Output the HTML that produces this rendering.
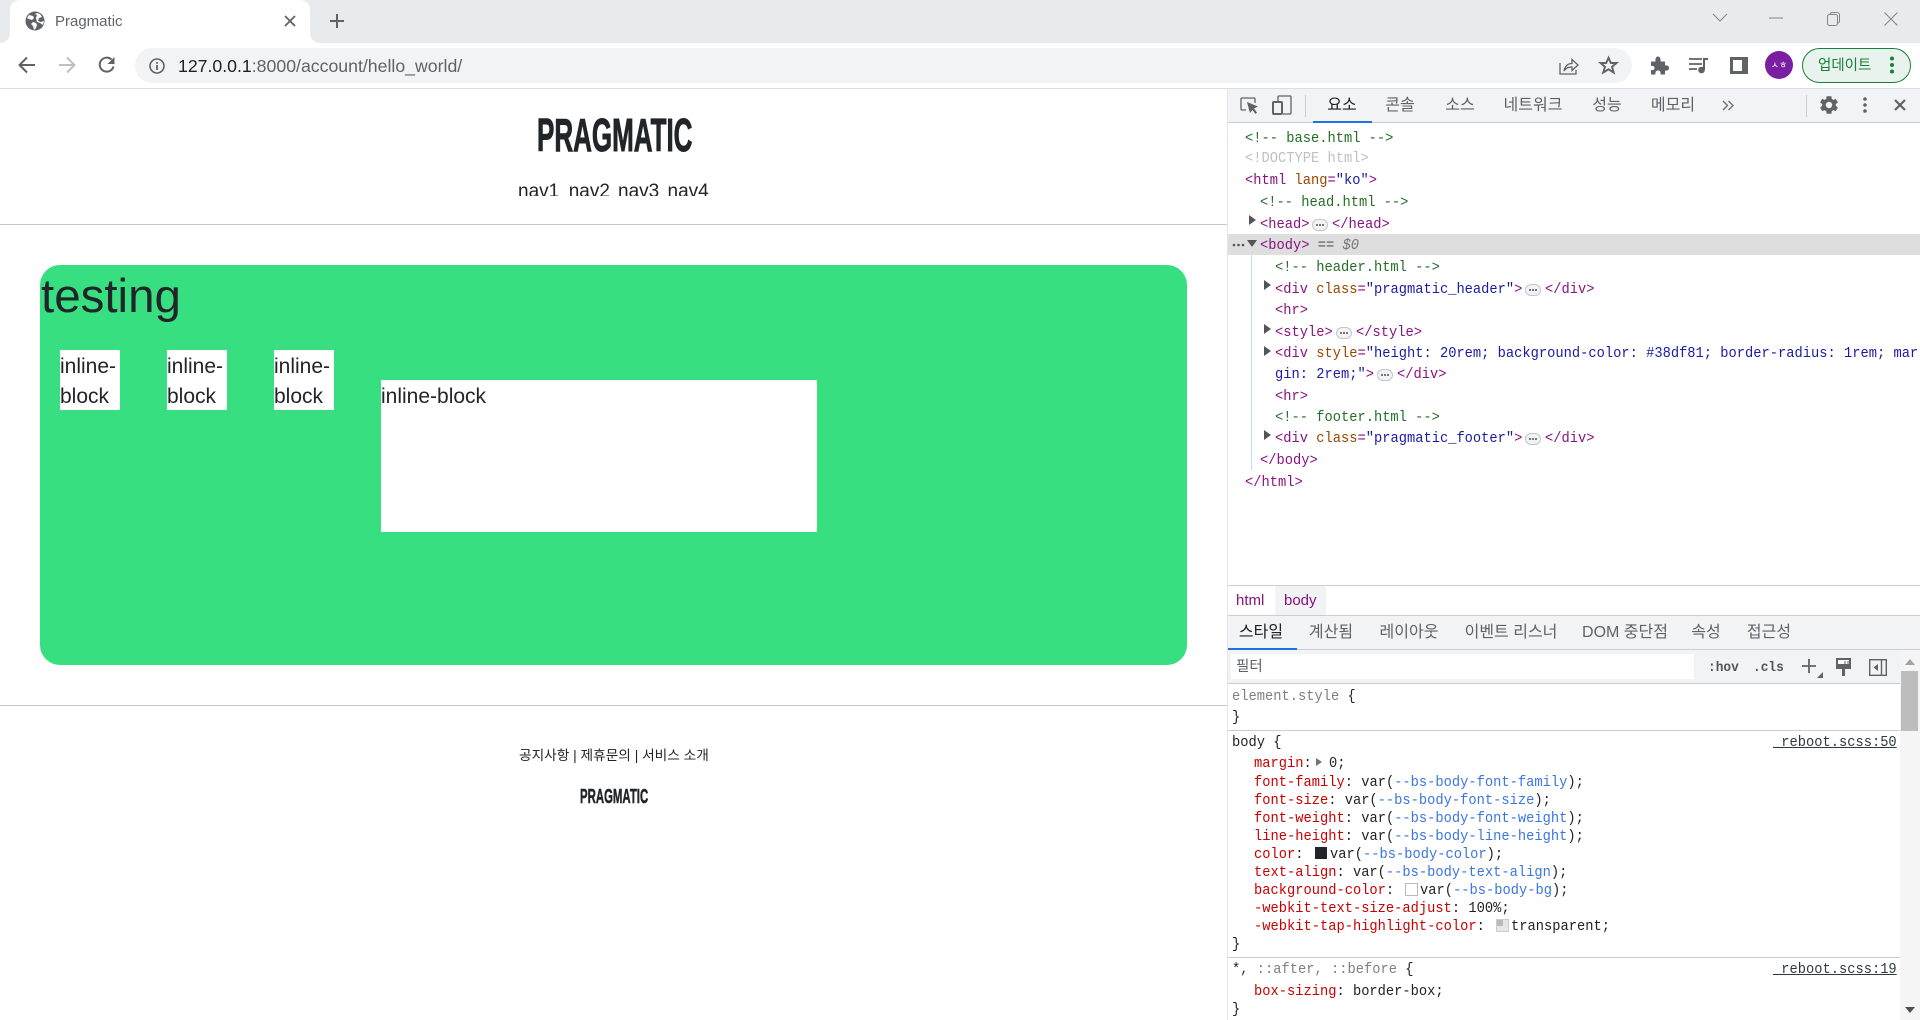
<!DOCTYPE html>
<html lang="ko"><head><meta charset="utf-8"><title>Pragmatic</title>
<style>
html,body{margin:0;padding:0;width:1920px;height:1020px;overflow:hidden;background:#fff}
body{position:relative;font-family:"Liberation Sans","Noto Sans CJK KR",sans-serif;color:#212529}
.a{position:absolute}
.t{position:absolute;white-space:pre;line-height:20px;height:20px}
.c{transform:translateX(-50%)}
.l{position:absolute;white-space:pre;height:20px;line-height:20px;font-family:"Liberation Mono","Noto Sans CJK KR",monospace;font-size:15px;transform:scaleX(.916);transform-origin:0 0;color:#222}
.g{color:#236e25}.p{color:#881280}.o{color:#994500}.b{color:#1a1aa6}.d{color:#c0c0c0}
.r{color:#c80000}.v{color:#3a76e0}.k{color:#303942}.e{color:#808080}
.tab{position:absolute;top:96px;font-size:16px;line-height:20px;color:#5f6368;transform:translateX(-50%);white-space:pre}
.tab2{position:absolute;top:623px;font-size:16px;line-height:20px;color:#5f6368;transform:translateX(-50%);white-space:pre}
.pill{position:absolute;width:14px;height:10px;margin-top:1px;border:1px solid #c4c6c9;border-radius:6px;background:#f1f3f4}
.pill:after{content:"";position:absolute;left:3px;top:4px;width:2px;height:2px;background:#777;box-shadow:3px 0 #777,6px 0 #777}
.tri{position:absolute;width:0;height:0;border-top:5px solid transparent;border-bottom:5px solid transparent;border-left:7px solid #555}
.tb{position:absolute;background:#fff}
.blk{position:absolute;background:#fff;color:#212529;font-size:21px}
svg{position:absolute;overflow:visible}
</style></head><body>

<!-- browser chrome -->
<div class="a" style="left:0;top:0;width:1920px;height:43px;background:#e8eaed"></div>
<svg style="left:0;top:0" width="330" height="44"><path d="M0 43a10 10 0 0 0 10-10V10A10 10 0 0 1 20 0H300a10 10 0 0 1 10 10V33a10 10 0 0 0 10 10z" fill="#fff"/></svg>
<svg style="left:25px;top:11px" width="20" height="20" viewBox="0 0 20 20"><circle cx="10" cy="10" r="9.5" fill="#5f6368"/><path d="M4 4l4 1 1 2-2 2-3-1-2-1zM8 11l3 1 1 2-1 3-2 2-1-4-2-2zM12 2l3 1 2 3-3 1-1 3 3 1 3-1-1 4-3-2-3-1-1-4 1-3-2-1z" fill="#fff"/></svg>
<div class="t" style="left:55px;top:12px;font-size:15px;color:#5f6368">Pragmatic</div>
<svg style="left:283px;top:14px" width="14" height="14"><path d="M2 2L12 12M12 2L2 12" stroke="#5f6368" stroke-width="1.8"/></svg>
<svg style="left:329px;top:13px" width="16" height="16"><path d="M8 1V15M1 8H15" stroke="#5f6368" stroke-width="2"/></svg>
<svg style="left:1712px;top:13px" width="16" height="10"><path d="M1 1L8 8L15 1" stroke="#80868b" fill="none"/></svg>
<svg style="left:1769px;top:17px" width="14" height="2"><path d="M0 1H14" stroke="#80868b"/></svg>
<svg style="left:1827px;top:12px" width="13" height="14"><path d="M3 2.5a2 2 0 0 1 2-2H10a2.5 2.5 0 0 1 2.5 2.5V9a2 2 0 0 1-2 2" stroke="#80868b" fill="none"/><rect x=".5" y="2.5" width="10" height="11" rx="2" fill="#e8eaed" stroke="#80868b"/></svg>
<svg style="left:1884px;top:12px" width="14" height="14"><path d="M.5.5L13.500 13.500M13.500.5L.5 13.500" stroke="#80868b"/></svg>

<div class="a" style="left:0;top:43px;width:1920px;height:45px;background:#fff"></div>
<div class="a" style="left:0;top:88px;width:1920px;height:1px;background:#dadce0"></div>
<svg style="left:18px;top:56px" width="18" height="18"><path d="M17 9H2M9 1.500L1.500 9L9 16.500" stroke="#5f6368" stroke-width="2" fill="none"/></svg>
<svg style="left:58px;top:56px" width="18" height="18"><path d="M1 9H16M9 1.500L16.500 9L9 16.500" stroke="#bdc1c6" stroke-width="2" fill="none"/></svg>
<svg style="left:98px;top:56px" width="18" height="18"><path d="M15.500 10.500A7 7 0 1 1 13.500 3.500" stroke="#5f6368" stroke-width="2" fill="none"/><path d="M16.500 1V8H9.500z" fill="#5f6368"/></svg>
<div class="a" style="left:135px;top:48px;width:1497px;height:35px;background:#f1f3f4;border-radius:18px"></div>
<svg style="left:149px;top:58px" width="16" height="16"><circle cx="8" cy="8" r="7" stroke="#5f6368" stroke-width="1.600" fill="none"/><path d="M8 7V12M8 4V5.800" stroke="#5f6368" stroke-width="1.800"/></svg>
<div class="t" style="left:178px;top:56px;font-size:17.7px;color:#5f6368"><span style="color:#202124">127.0.0.1</span>:8000/account/hello_world/</div>
<svg style="left:1559px;top:57px" width="20" height="18"><path d="M1 6V17H17V13" stroke="#5f6368" stroke-width="1.300" fill="none"/><path d="M5 14C6 9 9 6.500 13 6.500V2.500L19 8L13 13.500V10C9 10 7 11 5 14z" stroke="#5f6368" stroke-width="1.300" fill="none"/></svg>
<svg style="left:1599px;top:56px" width="19" height="18"><path d="M9.500 1.800L11.800 7H17.500L13 10.800L14.700 16.500L9.500 13.300L4.300 16.500L6 10.800L1.500 7H7.200z" stroke="#5f6368" stroke-width="1.900" fill="none"/></svg>
<svg style="left:1650px;top:56px" width="19" height="19"><path d="M1 5.500H5.500C5 2 6.500.5 8 .5S11 2 10.500 5.500H15V9.500C18 9 19 10.500 19 12S18 15 15 14.500V18.500H10.500C11 15.500 9.500 14.500 8 14.500S5 15.500 5.500 18.500H1V14C3.500 14.500 4.500 13.500 4.500 12S3.500 9.500 1 10z" fill="#5f6368"/></svg>
<svg style="left:1689px;top:57px" width="20" height="17"><path d="M0 2H13M0 7H13M0 12H8" stroke="#5f6368" stroke-width="1.700"/><path d="M15 2H19M15 1V13" stroke="#5f6368" stroke-width="2"/><circle cx="12.500" cy="13" r="3.300" fill="#5f6368"/></svg>
<svg style="left:1730px;top:57px" width="18" height="17"><path d="M0 0H18V17H0zM3 3V14H12V3z" fill="#5f6368" fill-rule="evenodd"/></svg>
<div class="a" style="left:1765px;top:51px;width:28px;height:28px;border-radius:50%;background:#7b1fa2;color:#fff;font-size:9px;line-height:28px;text-align:center">ㅅㅎ</div>
<div class="a" style="left:1802px;top:48px;width:107px;height:33px;border:1px solid #188038;border-radius:18px;background:#e9f3ed"></div>
<div class="t" style="left:1818px;top:56px;font-size:14.500px;color:#188038">업데이트</div>
<svg style="left:1890px;top:56px" width="4" height="18"><circle cx="2" cy="2.500" r="2" fill="#188038"/><circle cx="2" cy="9" r="2" fill="#188038"/><circle cx="2" cy="15.500" r="2" fill="#188038"/></svg>

<!-- page -->
<div class="a" style="left:0;top:89px;width:1227px;height:931px;background:#fff"></div>
<div class="a" style="left:537px;top:112px;font-size:46px;line-height:46px;font-weight:700;white-space:pre;color:#212529;-webkit-text-stroke:1px #212529;transform:scaleX(.565);transform-origin:0 0">PRAGMATIC</div>
<div class="a" style="left:500px;top:170px;width:240px;height:26px;overflow:hidden;font-size:19px;line-height:27px">
<span class="a" style="left:18px;top:8px">nav1</span><span class="a" style="left:68.700px;top:8px">nav2</span><span class="a" style="left:118px;top:8px">nav3</span><span class="a" style="left:167.500px;top:8px">nav4</span></div>
<div class="a" style="left:0;top:224px;width:1227px;height:1px;background:#c8c9ca"></div>

<div class="a" style="left:40px;top:265px;width:1147px;height:400px;background:#38df81;border-radius:20px"></div>
<div class="a" style="left:41px;top:267px;font-size:47.500px;line-height:60px;color:#212529">testing</div>
<div class="blk" style="left:60px;top:350px;width:60px;height:60px"><div class="a" style="left:0;top:2px;line-height:30px">inline-<br>block</div></div>
<div class="blk" style="left:167px;top:350px;width:60px;height:60px"><div class="a" style="left:0;top:2px;line-height:30px">inline-<br>block</div></div>
<div class="blk" style="left:274px;top:350px;width:60px;height:60px"><div class="a" style="left:0;top:2px;line-height:30px">inline-<br>block</div></div>
<div class="blk" style="left:381px;top:380px;width:436px;height:152px"><div class="a" style="left:0;top:2px;line-height:30px;white-space:pre">inline-block</div></div>

<div class="a" style="left:0;top:705px;width:1227px;height:1px;background:#c8c9ca"></div>
<div class="t" style="left:519px;top:746px;font-size:13.700px;color:#212529">공지사항 | 제휴문의 | 서비스 소개</div>
<div class="a" style="left:580px;top:787px;font-size:20px;line-height:20px;font-weight:700;white-space:pre;color:#212529;-webkit-text-stroke:.5px #212529;transform:scaleX(.57);transform-origin:0 0">PRAGMATIC</div>

<!-- devtools toolbar -->
<div class="a" style="left:1227px;top:89px;width:693px;height:931px;background:#fff"></div>
<div class="a" style="left:1227px;top:89px;width:1px;height:931px;background:#e4e6e9"></div>
<div class="a" style="left:1228px;top:89px;width:692px;height:33px;background:#f1f3f4"></div>
<div class="a" style="left:1228px;top:122px;width:692px;height:1px;background:#cbcdd1"></div>
<svg style="left:1240px;top:97px" width="18" height="17"><path d="M6 13H2a1 1 0 0 1-1-1V2a1 1 0 0 1 1-1H14a1 1 0 0 1 1 1V6" stroke="#5f6368" stroke-width="1.300" fill="none"/><path d="M7 5L18 9.500L14 11.500L17 15.500L15.500 17L12.500 13L10 16z" fill="#5f6368"/></svg>
<svg style="left:1272px;top:95px" width="20" height="20"><path d="M6 6V2a1 1 0 0 1 1-1H18a1 1 0 0 1 1 1V18a1 1 0 0 1-1 1H11" stroke="#5f6368" stroke-width="1.300" fill="none"/><rect x="1" y="7" width="9" height="12" rx="1" fill="#f1f3f4" stroke="#5f6368" stroke-width="2"/></svg>
<div class="a" style="left:1305px;top:95px;width:1px;height:22px;background:#ccc"></div>
<div class="tab" style="left:1342px;color:#202124">요소</div>
<div class="a" style="left:1313px;top:121px;width:59px;height:2px;background:#1a73e8"></div>
<div class="tab" style="left:1400px">콘솔</div>
<div class="tab" style="left:1460px">소스</div>
<div class="tab" style="left:1533px">네트워크</div>
<div class="tab" style="left:1607px">성능</div>
<div class="tab" style="left:1673px">메모리</div>
<svg style="left:1722px;top:100px" width="12" height="11"><path d="M1 1L5.500 5.500L1 10M6.500 1L11 5.500L6.500 10" stroke="#6e7276" stroke-width="1.400" fill="none"/></svg>
<div class="a" style="left:1806px;top:95px;width:1px;height:22px;background:#ccc"></div>
<svg style="left:1818px;top:94px" width="22" height="22" viewBox="0 0 24 24"><path fill-rule="evenodd" d="M19.400 13a7.500 7.500 0 0 0 0-2l2.300-1.800-2.300-3.900-2.700 1.100a7.500 7.500 0 0 0-1.700-1L14.600 2.500H9.400L9 5.400a7.500 7.500 0 0 0-1.700 1L4.600 5.300 2.300 9.200 4.600 11a7.500 7.500 0 0 0 0 2l-2.300 1.800 2.300 3.900 2.700-1.100a7.500 7.500 0 0 0 1.700 1l.4 2.900h5.200l.4-2.900a7.500 7.500 0 0 0 1.700-1l2.700 1.100 2.300-3.900zM12 15.500a3.500 3.500 0 1 1 0-7 3.500 3.500 0 0 1 0 7z" fill="#5f6368"/></svg>
<svg style="left:1863px;top:97px" width="4" height="16"><circle cx="2" cy="2" r="1.800" fill="#5f6368"/><circle cx="2" cy="8" r="1.800" fill="#5f6368"/><circle cx="2" cy="14" r="1.800" fill="#5f6368"/></svg>
<svg style="left:1894px;top:99px" width="12" height="12"><path d="M1 1L11 11M11 1L1 11" stroke="#5f6368" stroke-width="2.200"/></svg>

<!-- elements -->
<div class="a" style="left:1228px;top:234px;width:692px;height:21px;background:#dedede"></div>
<div class="a" style="left:1251px;top:255px;width:1px;height:215px;background:#c9d8f2"></div>
<div class="l g" style="left:1245px;top:129px">&lt;!-- base.html --&gt;</div>
<div class="l d" style="left:1245px;top:149px">&lt;!DOCTYPE html&gt;</div>
<div class="l" style="left:1245px;top:171px"><span class="p">&lt;html</span> <span class="o">lang</span><span class="p">=</span><span class="b">"ko"</span><span class="p">&gt;</span></div>
<div class="l g" style="left:1260px;top:193px">&lt;!-- head.html --&gt;</div>
<div class="tri" style="left:1249px;top:215px"></div>
<div class="l p" style="left:1260px;top:215px">&lt;head&gt;</div><div class="pill" style="left:1312px;top:218px"></div><div class="l p" style="left:1332px;top:215px">&lt;/head&gt;</div>
<svg style="left:1232px;top:243px" width="13" height="4"><circle cx="2" cy="2" r="1.300" fill="#555"/><circle cx="6.500" cy="2" r="1.300" fill="#555"/><circle cx="11" cy="2" r="1.300" fill="#555"/></svg>
<div class="a" style="left:1247px;top:240px;width:0;height:0;border-left:5px solid transparent;border-right:5px solid transparent;border-top:7px solid #555"></div>
<div class="l" style="left:1260px;top:236px"><span class="p">&lt;body&gt;</span> <span style="color:#555">==</span> <span style="color:#777;font-style:italic">$0</span></div>
<div class="l g" style="left:1275px;top:258px">&lt;!-- header.html --&gt;</div>
<div class="tri" style="left:1264px;top:280px"></div>
<div class="l" style="left:1275px;top:280px"><span class="p">&lt;div</span> <span class="o">class</span><span class="p">=</span><span class="b">"pragmatic_header"</span><span class="p">&gt;</span></div><div class="pill" style="left:1525px;top:283px"></div><div class="l p" style="left:1545px;top:280px">&lt;/div&gt;</div>
<div class="l p" style="left:1275px;top:301px">&lt;hr&gt;</div>
<div class="tri" style="left:1264px;top:324px"></div>
<div class="l p" style="left:1275px;top:323px">&lt;style&gt;</div><div class="pill" style="left:1336px;top:326px"></div><div class="l p" style="left:1356px;top:323px">&lt;/style&gt;</div>
<div class="tri" style="left:1264px;top:346px"></div>
<div class="a" style="left:1228px;top:340px;width:692px;height:30px;overflow:hidden">
<div class="l" style="left:47px;top:4px"><span class="p">&lt;div</span> <span class="o">style</span><span class="p">=</span><span class="b">"height: 20rem; background-color: #38df81; border-radius: 1rem; mar</span></div></div>
<div class="l b" style="left:1275px;top:365px">gin: 2rem;"<span class="p">&gt;</span></div><div class="pill" style="left:1377px;top:368px"></div><div class="l p" style="left:1397px;top:365px">&lt;/div&gt;</div>
<div class="l p" style="left:1275px;top:387px">&lt;hr&gt;</div>
<div class="l g" style="left:1275px;top:408px">&lt;!-- footer.html --&gt;</div>
<div class="tri" style="left:1264px;top:430px"></div>
<div class="l" style="left:1275px;top:429px"><span class="p">&lt;div</span> <span class="o">class</span><span class="p">=</span><span class="b">"pragmatic_footer"</span><span class="p">&gt;</span></div><div class="pill" style="left:1525px;top:432px"></div><div class="l p" style="left:1545px;top:429px">&lt;/div&gt;</div>
<div class="l p" style="left:1260px;top:451px">&lt;/body&gt;</div>
<div class="l p" style="left:1245px;top:473px">&lt;/html&gt;</div>

<!-- breadcrumb -->
<div class="a" style="left:1228px;top:585px;width:692px;height:1px;background:#cbcdd1"></div>
<div class="a" style="left:1275px;top:586px;width:51px;height:29px;background:#f1f3f4"></div>
<div class="t" style="left:1236px;top:591px;font-size:15px;color:#881280">html</div>
<div class="t" style="left:1284px;top:591px;font-size:15px;color:#881280">body</div>
<div class="a" style="left:1228px;top:615px;width:692px;height:35px;background:#f1f3f4;border-top:1px solid #cbcdd1;box-sizing:border-box;border-bottom:1px solid #cbcdd1"></div>
<div class="tab2" style="left:1261px;color:#202124">스타일</div>
<div class="tab2" style="left:1331px">계산됨</div>
<div class="tab2" style="left:1409px">레이아웃</div>
<div class="tab2" style="left:1511px">이벤트 리스너</div>
<div class="tab2" style="left:1625px">DOM 중단점</div>
<div class="tab2" style="left:1706px">속성</div>
<div class="tab2" style="left:1769px">접근성</div>
<div class="a" style="left:1228px;top:648px;width:69px;height:2px;background:#1a73e8"></div>

<!-- filter -->
<div class="a" style="left:1228px;top:650px;width:672px;height:33px;background:#f1f3f4"></div>
<div class="a" style="left:1228px;top:683px;width:672px;height:1px;background:#cbcdd1"></div>
<div class="a" style="left:1231px;top:654px;width:463px;height:25px;background:#fff"></div>
<div class="t" style="left:1236px;top:657px;font-size:14.500px;color:#5f6368">필터</div>
<div class="l" style="left:1708px;top:658px;font-size:14px;font-weight:700;color:#555">:hov</div>
<div class="l" style="left:1753px;top:658px;font-size:14px;font-weight:700;color:#555">.cls</div>
<svg style="left:1802px;top:659px" width="24" height="20"><path d="M7 0V14M0 7H14" stroke="#5f6368" stroke-width="1.800"/><path d="M21 13V19H15z" fill="#5f6368"/></svg>
<svg style="left:1836px;top:658px" width="15" height="19"><path d="M1 1H14V10H1z" fill="#fff" stroke="#5f6368" stroke-width="2"/><path d="M1 6H14V11H9V18H6V11H1z" fill="#5f6368"/><path d="M9 3V6M12 3V6" stroke="#5f6368"/></svg>
<svg style="left:1869px;top:659px" width="18" height="17"><rect x=".7" y=".7" width="16.600" height="15.600" fill="none" stroke="#5f6368" stroke-width="1.400"/><path d="M12.500 1V16" stroke="#5f6368" stroke-width="1.400"/><path d="M9 5V12L4.500 8.500z" fill="#5f6368"/></svg>

<!-- scrollbar -->
<div class="a" style="left:1900px;top:650px;width:20px;height:370px;background:#f5f5f5"></div>
<div class="a" style="left:1901px;top:671px;width:17px;height:60px;background:#bdbdbd"></div>
<div class="a" style="left:1905px;top:659px;width:0;height:0;border-left:5px solid transparent;border-right:5px solid transparent;border-bottom:6px solid #a3a3a3"></div>
<div class="a" style="left:1905px;top:1007px;width:0;height:0;border-left:5px solid transparent;border-right:5px solid transparent;border-top:6px solid #505050"></div>

<!-- styles -->
<div class="l" style="left:1232px;top:687px"><span class="e">element.style</span> {</div>
<div class="l" style="left:1232px;top:708px">}</div>
<div class="a" style="left:1228px;top:730px;width:672px;height:1px;background:#cbcdd1"></div>
<div class="l" style="left:1232px;top:733px">body {</div>
<div class="l" style="left:1773px;top:733px;text-decoration:underline;color:#303942">_reboot.scss:50</div>
<div class="l" style="left:1254px;top:754px"><span class="r">margin</span>:</div>
<div class="a" style="left:1316px;top:758px;width:0;height:0;border-top:4.500px solid transparent;border-bottom:4.500px solid transparent;border-left:6px solid #727272"></div>
<div class="l" style="left:1329px;top:754px">0;</div>
<div class="l" style="left:1254px;top:773px"><span class="r">font-family</span>: var(<span class="v">--bs-body-font-family</span>);</div>
<div class="l" style="left:1254px;top:791px"><span class="r">font-size</span>: var(<span class="v">--bs-body-font-size</span>);</div>
<div class="l" style="left:1254px;top:809px"><span class="r">font-weight</span>: var(<span class="v">--bs-body-font-weight</span>);</div>
<div class="l" style="left:1254px;top:827px"><span class="r">line-height</span>: var(<span class="v">--bs-body-line-height</span>);</div>
<div class="l" style="left:1254px;top:845px"><span class="r">color</span>:</div>
<div class="a" style="left:1315px;top:847px;width:12px;height:12px;background:#212529"></div>
<div class="l" style="left:1330px;top:845px">var(<span class="v">--bs-body-color</span>);</div>
<div class="l" style="left:1254px;top:863px"><span class="r">text-align</span>: var(<span class="v">--bs-body-text-align</span>);</div>
<div class="l" style="left:1254px;top:881px"><span class="r">background-color</span>:</div>
<div class="a" style="left:1405px;top:883px;width:11px;height:11px;background:#fff;border:1px solid #bbb"></div>
<div class="l" style="left:1420px;top:881px">var(<span class="v">--bs-body-bg</span>);</div>
<div class="l" style="left:1254px;top:899px"><span class="r">-webkit-text-size-adjust</span>: 100%;</div>
<div class="l" style="left:1254px;top:917px"><span class="r">-webkit-tap-highlight-color</span>:</div>
<div class="a" style="left:1496px;top:919px;width:11px;height:11px;border:1px solid #ccc;background:#e6e6e6"></div>
<div class="a" style="left:1497px;top:920px;width:6px;height:6px;background:#bbb"></div>
<div class="l" style="left:1511px;top:917px">transparent;</div>
<div class="l" style="left:1232px;top:935px">}</div>
<div class="a" style="left:1228px;top:957px;width:672px;height:1px;background:#cbcdd1"></div>
<div class="l" style="left:1232px;top:960px">*<span class="k">,</span> <span class="e">::after, ::before</span> {</div>
<div class="l" style="left:1773px;top:960px;text-decoration:underline;color:#303942">_reboot.scss:19</div>
<div class="l" style="left:1254px;top:982px"><span class="r">box-sizing</span>: border-box;</div>
<div class="l" style="left:1232px;top:1000px">}</div>
</body></html>
